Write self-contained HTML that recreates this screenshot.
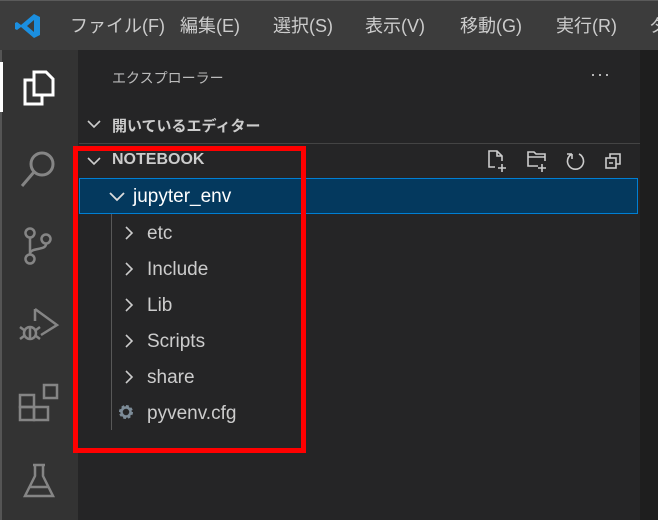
<!DOCTYPE html><html><head><meta charset="utf-8"><style>
body{margin:0;width:658px;height:520px;overflow:hidden;background:#252526;font-family:"Liberation Sans","Noto Sans CJK JP",sans-serif;position:relative}
.a{position:absolute;white-space:nowrap}
.menu{color:#ccc;font-size:18px;top:12px}
.row{color:#ccc;font-size:19px}
svg{position:absolute}
</style></head><body>
<div class="a" style="left:0;top:0;width:658px;height:50px;background:#3c3c3c;border-top:1px solid #5a5a5a;box-sizing:border-box"></div>
<svg style="left:14px;top:12px" width="28" height="28" viewBox="0 0 28 28"><path d="M20 2 L26 5 V23 L20 26 L7 15 L3 18 L1 17 V11 L3 10 L7 13 Z M20 8 L13 14 L20 20 Z" fill="#1b8fe0"/></svg>
<div class="a menu" style="left:70px">ファイル(F)</div>
<div class="a menu" style="left:180px">編集(E)</div>
<div class="a menu" style="left:273px">選択(S)</div>
<div class="a menu" style="left:365px">表示(V)</div>
<div class="a menu" style="left:460px">移動(G)</div>
<div class="a menu" style="left:556px">実行(R)</div>
<div class="a menu" style="left:649px">タ</div>
<div class="a" style="left:0;top:50px;width:78px;height:470px;background:#333;border-left:2px solid #555;box-sizing:border-box"></div>
<div class="a" style="left:0;top:62px;width:3px;height:50px;background:#fff"></div>
<div class="a" style="left:640px;top:50px;width:18px;height:470px;background:#1e1e1e"></div>
<svg style="left:20px;top:68px" width="38" height="40" viewBox="0 0 38 40" fill="none" stroke="#fff" stroke-width="3"><path d="M14 4 H26 L33 11 V27 H14 Z"/><path d="M14 12 H5 V36 H22 V27"/></svg>
<svg style="left:18px;top:148px" width="44" height="44" viewBox="0 0 44 44" fill="none" stroke="#858585" stroke-width="3"><circle cx="24" cy="16" r="11"/><path d="M16 24 L4 38"/></svg>
<svg style="left:20px;top:225px" width="36" height="42" viewBox="0 0 36 42" fill="none" stroke="#858585" stroke-width="2.5"><circle cx="10" cy="8" r="4.5"/><circle cx="10" cy="34" r="4.5"/><circle cx="26" cy="14" r="4.5"/><path d="M10 13 V29 M26 19 C26 26 10 22 10 29"/></svg>
<svg style="left:17px;top:303px" width="44" height="42" viewBox="0 0 44 42" fill="none" stroke="#858585" stroke-width="2.5"><path d="M18 6 L40 22 L24 32 M18 6 V18"/><circle cx="13" cy="30" r="6"/><path d="M3 24 L7 27 M3 36 L7 33 M23 24 L19 27 M23 36 L19 33 M13 24 V36"/></svg>
<svg style="left:18px;top:383px" width="42" height="40" viewBox="0 0 42 40" fill="none" stroke="#858585" stroke-width="2.5"><rect x="2" y="12" width="14" height="12"/><rect x="2" y="24" width="14" height="13"/><rect x="16" y="24" width="14" height="13"/><rect x="26" y="2" width="13" height="13"/></svg>
<svg style="left:22px;top:462px" width="34" height="38" viewBox="0 0 34 38" fill="none" stroke="#858585" stroke-width="2.5"><path d="M11 3 H23 M13 3 V14 L3 34 H31 L21 14 V3 M7 25 H27"/></svg>
<div class="a" style="left:112px;top:68px;color:#bbb;font-size:14px">エクスプローラー</div>
<div class="a" style="left:590px;top:64px;color:#ccc;font-size:18px;letter-spacing:1px">···</div>
<svg style="left:86px;top:117px" width="16" height="14" viewBox="0 0 16 14" fill="none" stroke="#ccc" stroke-width="1.6"><path d="M2 4 L8 10 L14 4"/></svg>
<div class="a" style="left:112px;top:115px;color:#ccc;font-size:15px;font-weight:bold">開いているエディター</div>
<div class="a" style="left:79px;top:143px;width:561px;height:1px;background:#444"></div>
<svg style="left:86px;top:154px" width="16" height="14" viewBox="0 0 16 14" fill="none" stroke="#ccc" stroke-width="1.6"><path d="M2 4 L8 10 L14 4"/></svg>
<div class="a" style="left:112px;top:151px;color:#ccc;font-size:16px;font-weight:bold">NOTEBOOK</div>
<svg style="left:486px;top:148px" width="140" height="26" viewBox="0 0 140 26" fill="none" stroke="#ccc" stroke-width="1.6"><path d="M9 19 H3 V3 H11 L16 8 V13 M11 3 V8 H16 M16 16 V24 M12 20 H20"/><path d="M52 18 H42 V4 H48 L50 6 H59 V13 M42 9 H59 M56 16 V24 M52 20 H60"/><path d="M86 6 A8 8 0 1 0 93 6 M86 6 V11 M86 6 H81"/><rect x="120" y="10" width="10" height="10"/><path d="M124 10 V6 H134 V16 H130 M123 15 H127"/></svg>
<div class="a" style="left:79px;top:178px;width:559px;height:36px;background:#04395e;border:1px solid #007fd4;box-sizing:border-box"></div>
<svg style="left:108px;top:190px" width="18" height="14" viewBox="0 0 18 14" fill="none" stroke="#ddd" stroke-width="1.8"><path d="M2 3 L9 10 L16 3"/></svg>
<div class="a row" style="left:133px;top:186px;color:#fff">jupyter_env</div>
<div class="a" style="left:111px;top:214px;width:1px;height:216px;background:#585858"></div>
<div class="a row" style="left:147px;top:223px">etc</div>
<div class="a row" style="left:147px;top:259px">Include</div>
<div class="a row" style="left:147px;top:295px">Lib</div>
<div class="a row" style="left:147px;top:331px">Scripts</div>
<div class="a row" style="left:147px;top:367px">share</div>
<div class="a row" style="left:147px;top:403px">pyvenv.cfg</div>
<svg style="left:122px;top:225px" width="14" height="160" viewBox="0 0 14 160" fill="none" stroke="#ccc" stroke-width="1.6"><path d="M4 2 L10 8 L4 14 M4 38 L10 44 L4 50 M4 74 L10 80 L4 86 M4 110 L10 116 L4 122 M4 146 L10 152 L4 158"/></svg>
<svg style="left:117px;top:403px" width="18" height="18" viewBox="0 0 18 18"><circle cx="9" cy="9" r="5.5" fill="none" stroke="#7d8c98" stroke-width="3" stroke-dasharray="2.6 1.7"/><circle cx="9" cy="9" r="4.5" fill="none" stroke="#7d8c98" stroke-width="2.5"/></svg>
<div class="a" style="left:73px;top:146px;width:233px;height:307px;border:5px solid #f00;box-sizing:border-box"></div>
</body></html>
